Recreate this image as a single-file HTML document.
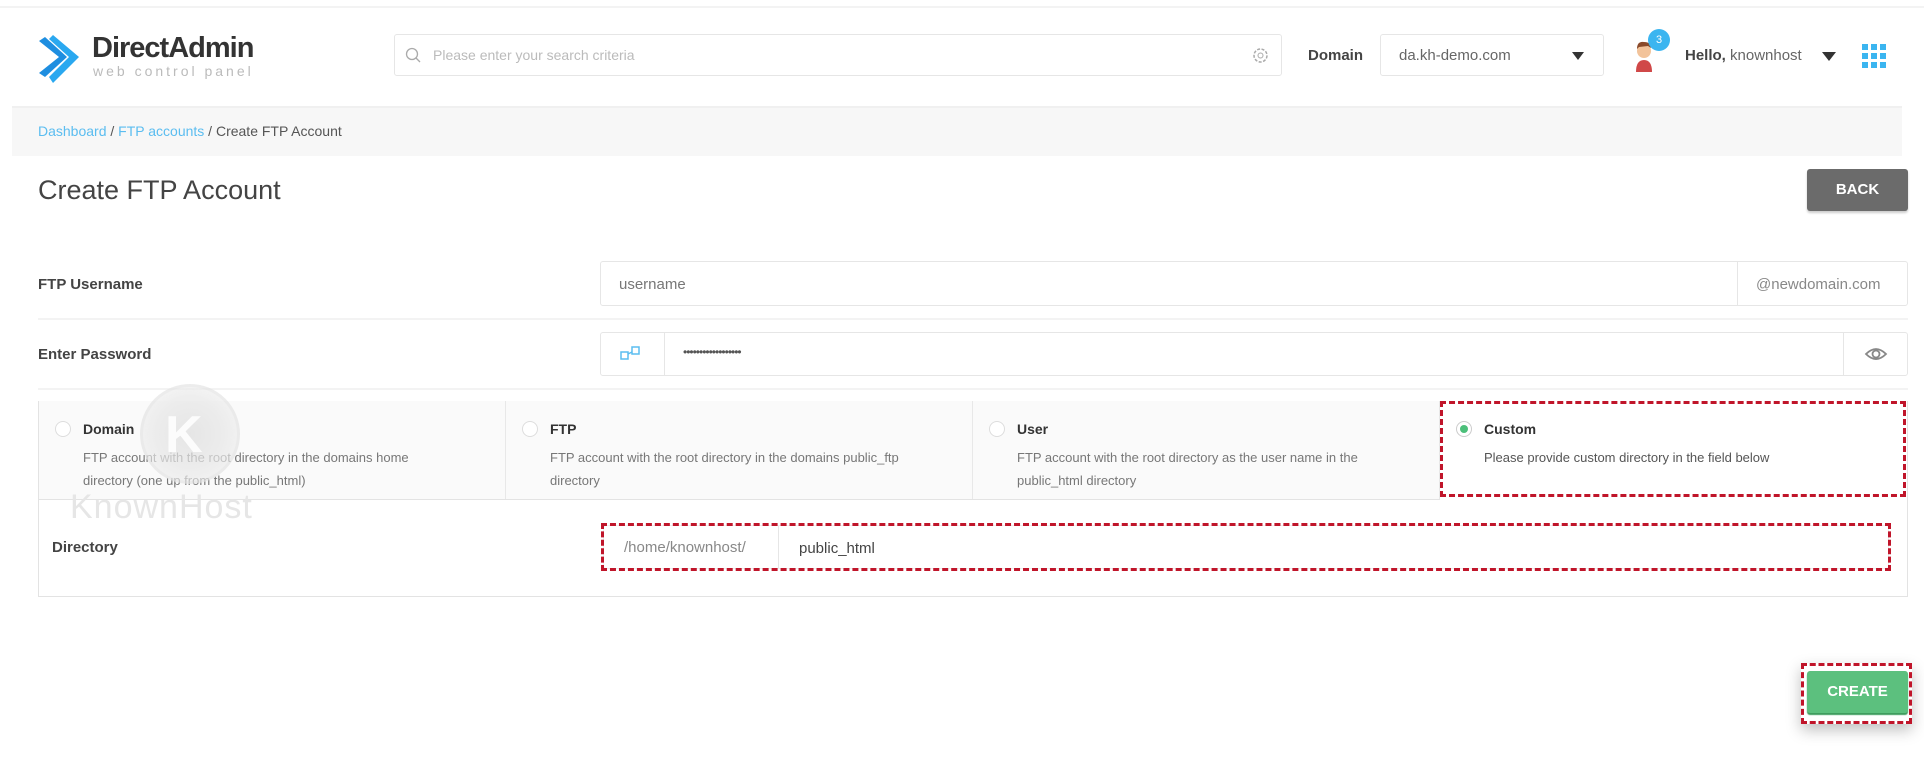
<!DOCTYPE html>
<html><head><meta charset="utf-8"><style>
*{box-sizing:border-box;margin:0;padding:0}
body{width:1924px;height:759px;background:#fff;font-family:"Liberation Sans",sans-serif;color:#333;position:relative;overflow:hidden}
.a{position:absolute}
.inp{position:absolute;border:1px solid #e6e6e6;border-radius:3px;background:#fff}
.lbl{font-size:15px;font-weight:bold;color:#444}
.opt{position:absolute;top:401px;height:99px;width:467px;background:#fafafa;border-right:1px solid #e8e8e8}
.opt .r{position:absolute;left:16px;top:20px;width:16px;height:16px;border:1px solid #ddd;border-radius:50%;background:#fff}
.opt .t{position:absolute;left:44px;top:20px;font-size:14px;font-weight:bold;color:#333}
.opt .d{position:absolute;left:44px;top:45px;font-size:13px;color:#777;line-height:23px;width:365px}
</style></head><body>
<div class="a" style="left:0;top:6px;width:1924px;height:2px;background:#f3f3f3"></div>
<svg class="a" style="left:37px;top:33px" width="46" height="52" viewBox="0 0 46 52"><path d="M2 8 L22 24 L2 40 L8 44 L30 24 L8 4Z" fill="#1e8ee0"/><path d="M16 2 L42 24 L16 50 L12 44 L32 24 L12 6Z" fill="#2aa8f0"/></svg>
<div class="a" style="left:92px;top:32px;font-size:29px;font-weight:bold;color:#333;letter-spacing:-1px">DirectAdmin</div>
<div class="a" style="left:93px;top:63px;font-size:14px;color:#bbb;letter-spacing:3px">web control panel</div>
<div class="inp" style="left:394px;top:34px;width:888px;height:42px"></div>
<svg class="a" style="left:405px;top:47px" width="16" height="16"><circle cx="7" cy="7" r="5.5" stroke="#aaa" fill="none" stroke-width="1.3"/><line x1="11" y1="11" x2="15" y2="15" stroke="#aaa" stroke-width="1.3"/></svg>
<div class="a" style="left:433px;top:47px;font-size:14px;color:#bbb">Please enter your search criteria</div>
<svg class="a" style="left:1252px;top:47px" width="17" height="17"><circle cx="8.5" cy="8.5" r="6.5" stroke="#aaa" fill="none" stroke-width="1.5" stroke-dasharray="3 1.5"/><circle cx="8.5" cy="8.5" r="2.5" stroke="#aaa" fill="none"/></svg>
<div class="a lbl" style="left:1308px;top:47px">Domain</div>
<div class="inp" style="left:1380px;top:34px;width:224px;height:42px"></div>
<div class="a" style="left:1399px;top:47px;font-size:15px;color:#666">da.kh-demo.com</div>
<div class="a" style="left:1572px;top:52px;border-left:6px solid transparent;border-right:6px solid transparent;border-top:8px solid #333"></div>
<svg class="a" style="left:1630px;top:36px" width="30" height="38"><circle cx="14" cy="15" r="7" fill="#f2c39a"/><path d="M7 13 Q7 5 14 6 Q21 6 21 12 L18 10 L9 11Z" fill="#8a4a2a"/><path d="M6 36 Q6 24 14 24 Q22 24 22 36Z" fill="#d04848"/></svg>
<div class="a" style="left:1648px;top:29px;width:22px;height:22px;border-radius:50%;background:#3bb5f0;color:#fff;font-size:11px;text-align:center;line-height:22px">3</div>
<div class="a" style="left:1685px;top:47px;font-size:15px;color:#444"><b>Hello,</b> <span style="color:#666">knownhost</span></div>
<div class="a" style="left:1822px;top:52px;border-left:7px solid transparent;border-right:7px solid transparent;border-top:9px solid #333"></div>
<svg class="a" style="left:1862px;top:44px" width="25" height="25"><g fill="#3bb5f0"><rect x="0" y="0" width="6" height="6"/><rect x="9" y="0" width="6" height="6"/><rect x="18" y="0" width="6" height="6"/><rect x="0" y="9" width="6" height="6"/><rect x="9" y="9" width="6" height="6"/><rect x="18" y="9" width="6" height="6"/><rect x="0" y="18" width="6" height="6"/><rect x="9" y="18" width="6" height="6"/><rect x="18" y="18" width="6" height="6"/></g></svg>
<div class="a" style="left:12px;top:106px;width:1890px;height:50px;background:#f7f7f7;border-top:2px solid #f0f0f0"></div>
<div class="a" style="left:38px;top:123px;font-size:14px;color:#555"><span style="color:#5bbdf0">Dashboard</span> / <span style="color:#5bbdf0">FTP accounts</span> / Create FTP Account</div>
<div class="a" style="left:38px;top:175px;font-size:27px;color:#444">Create FTP Account</div>
<div class="a" style="left:1807px;top:169px;width:101px;height:42px;background:#6b6b6b;border-radius:3px;color:#fff;font-weight:bold;font-size:15px;text-align:center;line-height:42px;box-shadow:0 2px 2px rgba(0,0,0,.2)">BACK</div>
<div class="a lbl" style="left:38px;top:276px">FTP Username</div>
<div class="inp" style="left:600px;top:261px;width:1308px;height:45px"></div>
<div class="a" style="left:1737px;top:262px;width:1px;height:43px;background:#e6e6e6"></div>
<div class="a" style="left:619px;top:276px;font-size:15px;color:#777">username</div>
<div class="a" style="left:1756px;top:276px;font-size:15px;color:#888">@newdomain.com</div>
<div class="a" style="left:38px;top:318px;width:1870px;height:2px;background:#f3f3f3"></div>
<div class="a lbl" style="left:38px;top:346px">Enter Password</div>
<div class="inp" style="left:600px;top:332px;width:1308px;height:44px"></div>
<div class="a" style="left:664px;top:333px;width:1px;height:42px;background:#e6e6e6"></div>
<div class="a" style="left:1843px;top:333px;width:1px;height:42px;background:#e6e6e6"></div>
<svg class="a" style="left:620px;top:345px" width="22" height="18"><rect x="1" y="7" width="7" height="7" fill="none" stroke="#5bbdf0" stroke-width="1.5"/><rect x="12" y="2" width="7" height="7" fill="none" stroke="#5bbdf0" stroke-width="1.5"/><line x1="8" y1="9" x2="12" y2="7" stroke="#5bbdf0" stroke-width="1.5"/></svg>
<div class="a" style="left:683px;top:345px;font-size:12px;color:#555;letter-spacing:-1px">••••••••••••••••••</div>
<svg class="a" style="left:1864px;top:345px" width="24" height="18"><path d="M2 9 Q12 -1 22 9 Q12 19 2 9Z" fill="none" stroke="#888" stroke-width="1.8"/><circle cx="12" cy="9" r="3.5" fill="none" stroke="#888" stroke-width="1.8"/></svg>
<div class="a" style="left:38px;top:388px;width:1870px;height:2px;background:#f3f3f3"></div>
<div class="a" style="left:38px;top:401px;width:1870px;height:196px;border:1px solid #e3e3e3;background:#fff"></div>
<div class="opt" style="left:39px"><div class="r"></div><div class="t">Domain</div><div class="d">FTP account with the root directory in the domains home directory (one up from the public_html)</div></div>
<div class="opt" style="left:506px"><div class="r"></div><div class="t">FTP</div><div class="d">FTP account with the root directory in the domains public_ftp directory</div></div>
<div class="opt" style="left:973px"><div class="r"></div><div class="t">User</div><div class="d">FTP account with the root directory as the user name in the public_html directory</div></div>
<div class="opt" style="left:1440px;width:467px;background:#fff;border:none"><div class="r" style="border-color:#ccc"><div style="margin:3px;width:8px;height:8px;border-radius:50%;background:#4cbf7a"></div></div><div class="t">Custom</div><div class="d" style="color:#555;width:400px">Please provide custom directory in the field below</div></div>
<div class="a" style="left:39px;top:499px;width:1401px;height:1px;background:#e3e3e3"></div>
<div class="a" style="left:1440px;top:401px;width:466px;height:96px;border:3px dashed #c0152a"></div>
<div class="a" style="left:140px;top:384px;width:100px;height:100px;border-radius:50%;border:3px solid #e4e4e4;background:radial-gradient(circle,#ddd 0,#e9e9e9 60%,rgba(240,240,240,.5) 100%);opacity:.7"></div>
<div class="a" style="left:165px;top:405px;font-size:52px;font-weight:bold;color:#fff;opacity:.9">K</div>
<div class="a" style="left:70px;top:488px;font-size:34px;color:#e6e6e6;letter-spacing:1px">KnownHost</div>
<div class="a lbl" style="left:52px;top:539px">Directory</div>
<div class="inp" style="left:603px;top:525px;width:1286px;height:44px;border-color:#eee"></div>
<div class="a" style="left:778px;top:526px;width:1px;height:42px;background:#e6e6e6"></div>
<div class="a" style="left:624px;top:539px;font-size:15px;color:#888">/home/knownhost/</div>
<div class="a" style="left:799px;top:540px;font-size:15px;color:#444">public_html</div>
<div class="a" style="left:601px;top:523px;width:1290px;height:48px;border:3px dashed #c0152a"></div>
<div class="a" style="left:1801px;top:663px;width:111px;height:61px;border:3px dashed #c0152a;box-shadow:0 6px 14px rgba(0,0,0,.25)"></div>
<div class="a" style="left:1807px;top:671px;width:101px;height:42px;background:#5cc07e;border-radius:3px;color:#fff;font-weight:bold;font-size:15px;text-align:center;line-height:42px;box-shadow:0 2px 1px #3f9c5e">CREATE</div>
</body></html>
